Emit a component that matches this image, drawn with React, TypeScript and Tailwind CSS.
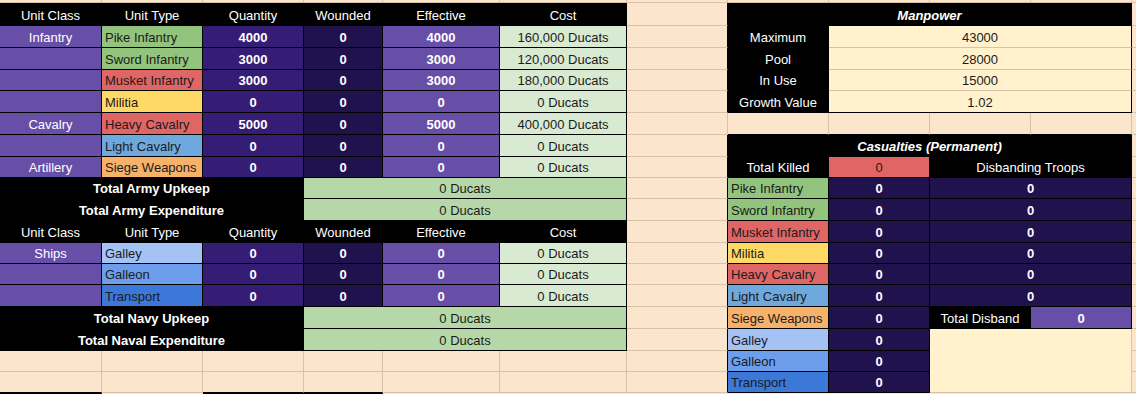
import React from "react";

const CS: Record<number, string> = {
  1: "col-start-1", 2: "col-start-2", 3: "col-start-3", 4: "col-start-4", 5: "col-start-5", 6: "col-start-6",
  7: "col-start-7", 8: "col-start-8", 9: "col-start-9", 10: "col-start-10", 11: "col-start-11", 12: "col-start-12",
};
const RS: Record<number, string> = {
  1: "row-start-1", 2: "row-start-2", 3: "row-start-3", 4: "row-start-4", 5: "row-start-5", 6: "row-start-6",
  7: "row-start-7", 8: "row-start-8", 9: "row-start-9", 10: "row-start-10", 11: "row-start-11", 12: "row-start-12",
  13: "row-start-13", 14: "row-start-14", 15: "row-start-15", 16: "row-start-16", 17: "row-start-17",
  18: "row-start-18", 19: "row-start-19", 20: "row-start-20",
};
const CSP: Record<number, string> = { 1: "col-span-1", 2: "col-span-2", 3: "col-span-3", 4: "col-span-4", 8: "col-span-8" };
const RSP: Record<number, string> = { 1: "row-span-1", 2: "row-span-2", 3: "row-span-3" };

const K = "border-r-black";
const KB = "border-b-black";
const G = "border-r-[#d8c2a8]";
const GB = "border-b-[#d8c2a8]";

type CellProps = {
  c: number;
  r: number; // spreadsheet row (1..18); grid row = r + 1
  cs?: number;
  rs?: number;
  bg: string;
  br?: string;
  bb?: string;
  align?: "c" | "l";
  cls?: string;
  children?: React.ReactNode;
};

function Cell({ c, r, cs = 1, rs = 1, bg, br = K, bb = KB, align = "c", cls = "", children }: CellProps) {
  return (
    <div
      className={`${CS[c]} ${RS[r + 1]} ${CSP[cs]} ${RSP[rs]} ${bg} border-r border-b ${br} ${bb} flex items-end overflow-hidden whitespace-nowrap pb-[2px] leading-[15px] ${
        align === "c" ? "justify-center" : "justify-start pl-[3px]"
      } ${cls}`}
    >
      {children}
    </div>
  );
}

const PEACH = "bg-[#fce5cd]";
const BLACK = "bg-black";
const PURPLE = "bg-[#674ea7]";
const DPURPLE = "bg-[#351c75]";
const DDPURPLE = "bg-[#20124d]";
const COST = "bg-[#d9ead3]";
const TOTAL = "bg-[#b6d7a8]";
const YEL = "bg-[#fff2cc]";

const WHITE = "text-white";
const WB = "text-white font-bold";
const DARK = "text-[#1b1b1b]";

const typeColor: Record<string, string> = {
  "Pike Infantry": "bg-[#93c47d]",
  "Sword Infantry": "bg-[#93c47d]",
  "Musket Infantry": "bg-[#e06666]",
  Militia: "bg-[#ffd966]",
  "Heavy Cavalry": "bg-[#e06666]",
  "Light Cavalry": "bg-[#6fa8dc]",
  "Siege Weapons": "bg-[#f6b26b]",
  Galley: "bg-[#a4c2f4]",
  Galleon: "bg-[#6d9eeb]",
  Transport: "bg-[#3c78d8]",
};

type Unit = { r: number; cls: string; type: string; q: string; w: string; e: string; cost: string };

const units: Unit[] = [
  { r: 2, cls: "Infantry", type: "Pike Infantry", q: "4000", w: "0", e: "4000", cost: "160,000 Ducats" },
  { r: 3, cls: "", type: "Sword Infantry", q: "3000", w: "0", e: "3000", cost: "120,000 Ducats" },
  { r: 4, cls: "", type: "Musket Infantry", q: "3000", w: "0", e: "3000", cost: "180,000 Ducats" },
  { r: 5, cls: "", type: "Militia", q: "0", w: "0", e: "0", cost: "0 Ducats" },
  { r: 6, cls: "Cavalry", type: "Heavy Cavalry", q: "5000", w: "0", e: "5000", cost: "400,000 Ducats" },
  { r: 7, cls: "", type: "Light Cavalry", q: "0", w: "0", e: "0", cost: "0 Ducats" },
  { r: 8, cls: "Artillery", type: "Siege Weapons", q: "0", w: "0", e: "0", cost: "0 Ducats" },
  { r: 12, cls: "Ships", type: "Galley", q: "0", w: "0", e: "0", cost: "0 Ducats" },
  { r: 13, cls: "", type: "Galleon", q: "0", w: "0", e: "0", cost: "0 Ducats" },
  { r: 14, cls: "", type: "Transport", q: "0", w: "0", e: "0", cost: "0 Ducats" },
];

const headers = ["Unit Class", "Unit Type", "Quantity", "Wounded", "Effective", "Cost"];

const casualtyTypes = [
  "Pike Infantry",
  "Sword Infantry",
  "Musket Infantry",
  "Militia",
  "Heavy Cavalry",
  "Light Cavalry",
  "Siege Weapons",
  "Galley",
  "Galleon",
  "Transport",
];

export default function App() {
  const cells: React.ReactNode[] = [];
  let k = 0;
  const add = (el: React.ReactElement) => cells.push(React.cloneElement(el, { key: k++ }));

  // top strip (grid row 1)
  for (let c = 1; c <= 12; c++) {
    cells.push(
      <div
        key={k++}
        className={`${CS[c]} row-start-1 ${PEACH} border-b border-b-[#d8c2a8] ${c < 12 ? "border-r border-r-[#d8c2a8]" : ""}`}
      />
    );
  }

  // left table headers
  for (const r of [1, 11]) {
    headers.forEach((h, i) => add(<Cell c={i + 1} r={r} bg={BLACK} cls={WHITE}>{h}</Cell>));
  }

  // unit rows
  for (const u of units) {
    add(<Cell c={1} r={u.r} bg={PURPLE} cls={WHITE}>{u.cls}</Cell>);
    add(<Cell c={2} r={u.r} bg={typeColor[u.type]} align="l" cls={DARK}>{u.type}</Cell>);
    add(<Cell c={3} r={u.r} bg={DPURPLE} cls={WB}>{u.q}</Cell>);
    add(<Cell c={4} r={u.r} bg={DDPURPLE} cls={WB}>{u.w}</Cell>);
    add(<Cell c={5} r={u.r} bg={PURPLE} cls={WB}>{u.e}</Cell>);
    add(<Cell c={6} r={u.r} bg={COST} cls={DARK}>{u.cost}</Cell>);
  }

  // totals
  const totals: [number, string][] = [
    [9, "Total Army Upkeep"],
    [10, "Total Army Expenditure"],
    [15, "Total Navy Upkeep"],
    [16, "Total Naval Expenditure"],
  ];
  for (const [r, label] of totals) {
    add(<Cell c={1} r={r} cs={3} bg={BLACK} cls={WB}>{label}</Cell>);
    add(<Cell c={4} r={r} cs={3} bg={TOTAL} cls={DARK}>0 Ducats</Cell>);
  }

  // empty rows 17-18, cols A-F
  for (const r of [17, 18]) {
    for (let c = 1; c <= 6; c++) {
      const blackBottom = r === 18 && (c === 1 || c === 3 || c === 4);
      add(<Cell c={c} r={r} bg={PEACH} br={G} bb={blackBottom ? KB : GB} />);
    }
  }

  // column G
  for (let r = 1; r <= 18; r++) {
    add(<Cell c={7} r={r} bg={PEACH} br={r === 6 ? G : K} bb={GB} />);
  }

  // column L
  for (let r = 1; r <= 18; r++) {
    add(<Cell c={12} r={r} bg={PEACH} br="border-r-0" bb={GB} />);
  }

  // Manpower table
  add(<Cell c={8} r={1} cs={4} bg={BLACK} cls="text-white font-bold italic">Manpower</Cell>);
  const mp: [string, string][] = [
    ["Maximum", "43000"],
    ["Pool", "28000"],
    ["In Use", "15000"],
    ["Growth Value", "1.02"],
  ];
  mp.forEach(([l, v], i) => {
    const r = i + 2;
    add(<Cell c={8} r={r} bg={BLACK} cls={WHITE}>{l}</Cell>);
    add(<Cell c={9} r={r} cs={3} bg={YEL} bb={r === 5 ? KB : GB} cls={DARK}>{v}</Cell>);
  });

  // row 6 empty H-K
  for (let c = 8; c <= 11; c++) {
    add(<Cell c={c} r={6} bg={PEACH} br={G} bb={KB} />);
  }

  // Casualties
  add(<Cell c={8} r={7} cs={4} bg={BLACK} cls="text-white font-bold italic">Casualties (Permanent)</Cell>);
  add(<Cell c={8} r={8} bg={BLACK} cls={WHITE}>Total Killed</Cell>);
  add(<Cell c={9} r={8} bg="bg-[#e06666]" cls={DARK}>0</Cell>);
  add(<Cell c={10} r={8} cs={2} bg={BLACK} cls={WHITE}>Disbanding Troops</Cell>);

  casualtyTypes.forEach((t, i) => {
    const r = i + 9;
    add(<Cell c={8} r={r} bg={typeColor[t]} align="l" cls={DARK}>{t}</Cell>);
    add(<Cell c={9} r={r} bg={DDPURPLE} cls={WB}>0</Cell>);
    if (r <= 14) {
      add(<Cell c={10} r={r} cs={2} bg={DDPURPLE} cls={WB}>0</Cell>);
    }
  });
  add(<Cell c={10} r={15} bg={BLACK} cls={WHITE}>Total Disband</Cell>);
  add(<Cell c={11} r={15} bg={PURPLE} cls={WB}>0</Cell>);
  add(<Cell c={10} r={16} cs={2} rs={3} bg={YEL} br={G} bb={GB} />);

  // bottom 1px strip (grid row 20)
  cells.push(<div key={k++} className="col-start-1 row-start-20 bg-black" />);
  cells.push(<div key={k++} className={`col-start-2 row-start-20 ${PEACH}`} />);
  cells.push(<div key={k++} className="col-start-3 row-start-20 col-span-2 bg-black" />);
  cells.push(<div key={k++} className={`col-start-5 row-start-20 col-span-8 ${PEACH}`} />);

  return (
    <div className="w-[1136px] h-[394px] overflow-hidden bg-[#fce5cd] font-['Liberation_Sans',Arial,sans-serif] text-[13px]">
      <div className="grid grid-cols-[102px_101px_101px_79px_117px_127px_101px_101px_101px_101px_101px_4px] grid-rows-[3px_23px_22px_22px_21px_22px_22px_22px_21px_21px_22px_22px_21px_21px_22px_22px_22px_21px_21px_1px]">
        {cells}
      </div>
    </div>
  );
}
